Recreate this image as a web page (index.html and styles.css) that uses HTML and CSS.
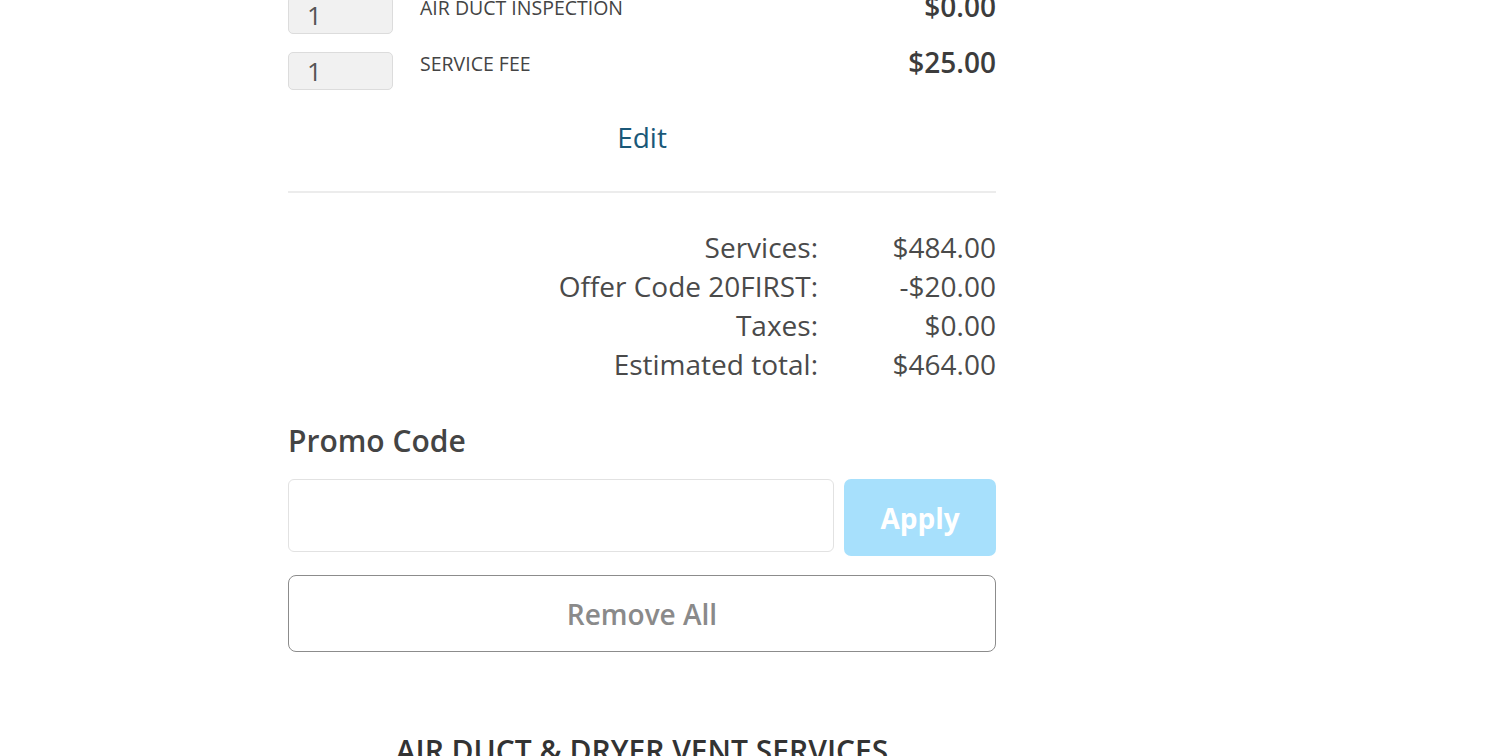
FILE: index.html
```html
<!DOCTYPE html>
<html lang="en">
  <head>
    <meta charset="UTF-8" />
    <meta name="viewport" content="width=device-width, initial-scale=1.0" />
    <title>Cart</title>
    <link rel="stylesheet" href="styles.css">
  </head>
  <body>
    <div class="cart">
      <div class="item">
        <input class="qty" type="text" value="1" />
        <span class="name">AIR DUCT INSPECTION</span>
        <span class="price">$0.00</span>
      </div>
      <div class="item">
        <input class="qty" type="text" value="1" />
        <span class="name">SERVICE FEE</span>
        <span class="price">$25.00</span>
      </div>
      <a class="edit" href="#">Edit</a>
      <hr class="divider" />
      <div class="summary">
        <span>Services:</span><span>$484.00</span>
        <span>Offer Code 20FIRST:</span><span>-$20.00</span>
        <span>Taxes:</span><span>$0.00</span>
        <span>Estimated total:</span><span>$464.00</span>
      </div>
      <h3 class="promo-title">Promo Code</h3>
      <div class="promo">
        <input class="promo-input" type="text" />
        <button class="apply">Apply</button>
      </div>
      <button class="remove">Remove All</button>
      <h2 class="section">AIR DUCT &amp; DRYER VENT SERVICES</h2>
    </div>
  </body>
</html>
```

FILE: styles.css
```css
body {
  margin: 0;
  font-family: "Open Sans", sans-serif;
  background: #fff;
  color: #4a4a4a;
}
.cart {
  width: 708px;
  margin-left: 288px;
  margin-top: -4px;
  display: flex;
  flex-direction: column;
}
.item {
  display: flex;
  align-items: center;
  height: 38px;
  margin-bottom: 18px;
}
.qty {
  width: 105px;
  height: 38px;
  box-sizing: border-box;
  border: 1px solid #dcdcdc;
  border-radius: 5px;
  background: #f1f1f1;
  font-family: inherit;
  font-size: 26px;
  color: #555;
  padding: 0 0 0 18px;
}
.name {
  margin-left: 27px;
  font-size: 19.5px;
  color: #444;
  align-self: flex-start;
  margin-top: -2px;
}
.price {
  margin-left: auto;
  font-size: 28px;
  font-weight: 600;
  color: #3c3c3c;
  align-self: flex-start;
  margin-top: -9px;
}
.edit {
  align-self: center;
  font-size: 28px;
  color: #1a5878;
  text-decoration: none;
  margin-top: 10px;
}
.divider {
  width: 100%;
  border: none;
  border-top: 2px solid #ececec;
  margin: 35px 0 0;
}
.summary {
  display: grid;
  grid-template-columns: 1fr 178px;
  justify-items: end;
  font-size: 28px;
  line-height: 39px;
  margin-top: 35px;
}
.promo-title {
  font-size: 30px;
  font-weight: 600;
  color: #444;
  margin: 36px 0 0;
}
.promo {
  display: flex;
  gap: 10px;
  margin-top: 18px;
}
.promo-input {
  flex: 1;
  height: 73px;
  box-sizing: border-box;
  border: 1.5px solid #e2e2e2;
  border-radius: 6px;
}
.apply {
  width: 152px;
  height: 77px;
  border: none;
  border-radius: 7px;
  background: #a7e0fc;
  color: #fff;
  font-family: inherit;
  font-size: 28px;
  font-weight: 700;
}
.remove {
  margin-top: 19px;
  height: 77px;
  border: 1.5px solid #8c8c8c;
  border-radius: 8px;
  background: #fff;
  color: #8a8a8a;
  font-family: inherit;
  font-size: 28px;
  font-weight: 600;
}
.section {
  align-self: center;
  font-size: 30px;
  font-weight: 600;
  color: #333;
  margin: 78px 0 0;
}
```
